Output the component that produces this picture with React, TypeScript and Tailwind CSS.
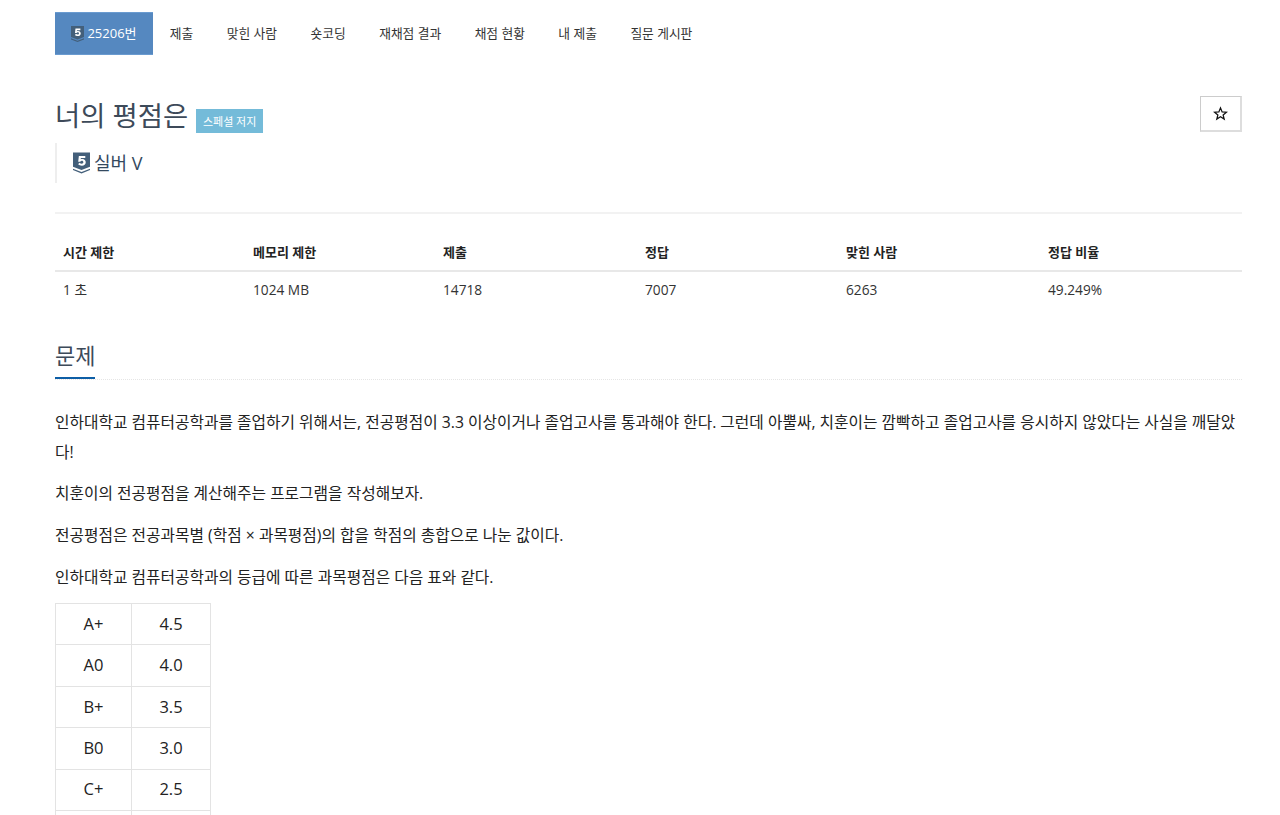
const font = { fontFamily: '"Open Sans", "Noto Sans CJK KR", sans-serif' };

function TierBadge({ className }: { className: string }) {
  return (
    <svg viewBox="0 0 18 22" className={className} aria-hidden="true">
      <path d="M0 0H18V15L9 18.5L0 15Z" fill="#435F7A" />
      <path d="M0 17L9 20.5L18 17V18.5L9 22L0 18.5Z" fill="#435F7A" />
      <path d="M13 3.5H6.2L5.5 9.6H7.6C8.1 8.9 8.7 8.7 9.3 8.7C10.4 8.7 11 9.4 11 10.2C11 11.1 10.3 11.7 9.3 11.7C8.4 11.7 7.6 11.3 6.9 10.7L5.4 12.4C6.4 13.3 7.7 13.9 9.4 13.9C11.8 13.9 13.5 12.4 13.5 10.2C13.5 8.1 12 6.7 10 6.7C9.2 6.7 8.6 6.9 8.1 7.1L8.3 5.7H13Z" fill="#fff" />
    </svg>
  );
}

const navItems = ["제출", "맞힌 사람", "숏코딩", "재채점 결과", "채점 현황", "내 제출", "질문 게시판"];

const stats = [
  { label: "시간 제한", value: "1 초", width: "w-[189px]", pad: "pl-[8px]" },
  { label: "메모리 제한", value: "1024 MB", width: "w-[190px]", pad: "pl-[9px]" },
  { label: "제출", value: "14718", width: "w-[202px]", pad: "pl-[9px]" },
  { label: "정답", value: "7007", width: "w-[201px]", pad: "pl-[9px]" },
  { label: "맞힌 사람", value: "6263", width: "w-[202px]", pad: "pl-[9px]" },
  { label: "정답 비율", value: "49.249%", width: "", pad: "pl-[9px]" },
];

const grades = [
  ["A+", "4.5"],
  ["A0", "4.0"],
  ["B+", "3.5"],
  ["B0", "3.0"],
  ["C+", "2.5"],
  ["C0", "2.0"],
];

export default function App() {
  return (
    <div style={font} className="h-[815px] overflow-hidden bg-white px-[55px] pr-[38px] pt-3 text-[#333]">
      <nav className="flex h-[43px] items-center text-[12.75px] text-[#333]">
        <a className="flex h-[43px] w-[98px] items-center justify-center gap-[3px] border-y border-[#6a9bd0] bg-[#5588c0] text-[13px] text-white">
          <TierBadge className="h-[16px] w-[13px]" />
          25206번
        </a>
        {navItems.map((item) => (
          <a key={item} className="px-[16.75px]">{item}</a>
        ))}
      </nav>

      <div className="mt-[41px] flex items-start justify-between">
        <div className="flex items-end">
          <h1 className="pt-[1px] text-[27.4px] leading-[37px] text-[#3d4a59]">너의 평점은</h1>
          <span className="mb-[1px] ml-2 flex h-6 w-[67px] items-center justify-center bg-[#74bbd9] pt-[2px] text-[11px] text-white">스페셜 저지</span>
        </div>
        <button className="flex h-9 w-[42px] items-center justify-center border border-b-2 border-r-2 border-[#ccc] border-b-[#ddd] border-r-[#ddd]">
          <svg viewBox="0 0 24 24" className="h-[15px] w-[15px]" fill="none" stroke="#111" strokeWidth="2">
            <path d="M12 3L14.6 9.4L21.5 9.9L16.2 14.3L17.9 21L12 17.3L6.1 21L7.8 14.3L2.5 9.9L9.4 9.4Z" />
          </svg>
        </button>
      </div>

      <div className="mt-[9px] flex h-10 items-center gap-[4px] border-l-2 border-[#eee] pl-4">
        <TierBadge className="h-[22px] w-[17px]" />
        <span className="text-[18px] leading-none text-[#34495e]">실버 V</span>
      </div>

      <div className="mt-[29px] border-t-2 border-[#f2f2f2]" />

      <div className="mt-[20px] flex h-[38px] items-center border-b-2 border-[#e8e8e8] pt-[1px] text-[13px] font-semibold text-[#222]">
        {stats.map((s) => (
          <div key={s.label} className={`${s.width} ${s.pad}`}>{s.label}</div>
        ))}
      </div>
      <div className="flex h-[36px] items-center text-[13.7px] text-[#333]">
        {stats.map((s) => (
          <div key={s.label} className={`${s.width} ${s.pad}`}>{s.value}</div>
        ))}
      </div>

      <div className="mt-[31px] flex h-[38px] items-start">
        <h2 className="text-[22px] leading-[32px] text-[#3d4a59]">문제</h2>
      </div>
      <div className="border-b border-dotted border-[#e5e5e5]">
        <div className="h-[2px] w-10 bg-[#0d5ea6]" />
      </div>

      <div className="mt-[27px] text-[15.75px] leading-[30px] text-[#222]">
        <p>인하대학교 컴퓨터공학과를 졸업하기 위해서는, 전공평점이 3.3 이상이거나 졸업고사를 통과해야 한다. 그런데 아뿔싸, 치훈이는 깜빡하고 졸업고사를 응시하지 않았다는 사실을 깨달았다!</p>
        <p className="mt-[11px]">치훈이의 전공평점을 계산해주는 프로그램을 작성해보자.</p>
        <p className="mt-[12px]">전공평점은 전공과목별 (학점 × 과목평점)의 합을 학점의 총합으로 나눈 값이다.</p>
        <p className="mt-[12px]">인하대학교 컴퓨터공학과의 등급에 따른 과목평점은 다음 표와 같다.</p>
      </div>

      <table className="mt-[11px] w-[156px] border-collapse text-center text-[16.5px] text-[#222]">
        <tbody>
          {grades.map(([grade, point]) => (
            <tr key={grade} className="h-[41.4px]">
              <td className="w-[76px] border border-[#e3e3e3]">{grade}</td>
              <td className="border border-[#e3e3e3]">{point}</td>
            </tr>
          ))}
        </tbody>
      </table>
    </div>
  );
}
